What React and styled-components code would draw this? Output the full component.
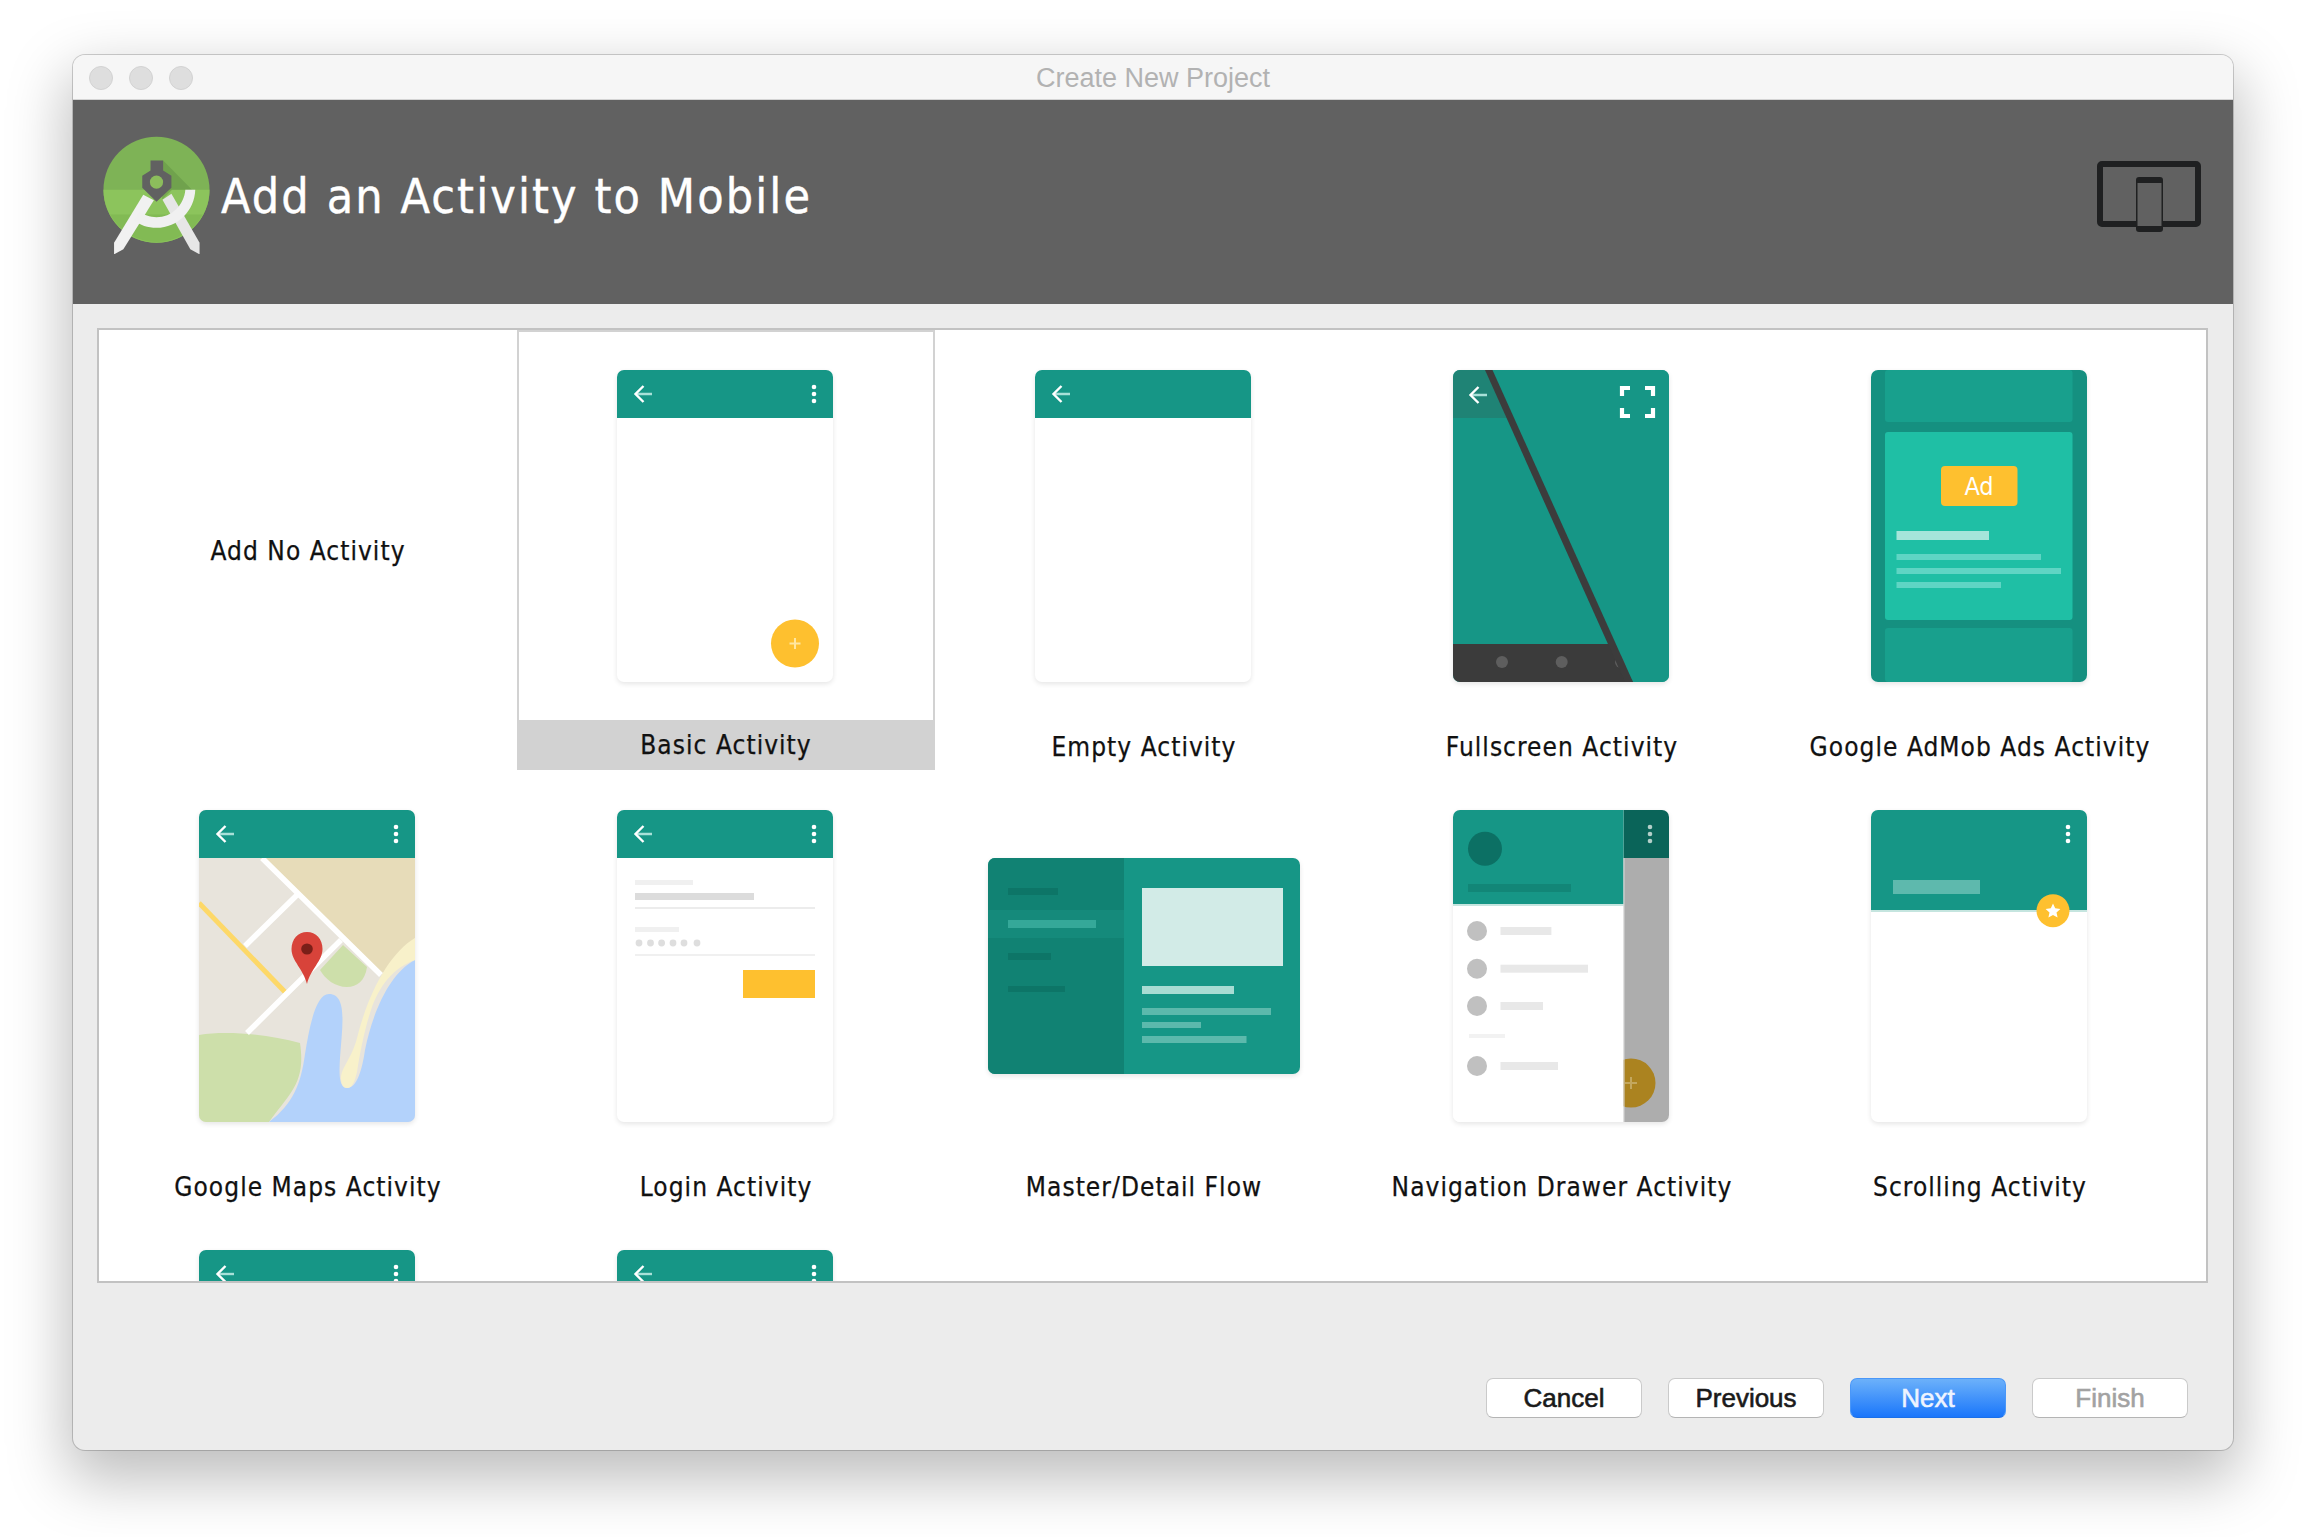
import React from 'react';
import styled, { createGlobalStyle } from 'styled-components';

const GlobalStyle = createGlobalStyle`
  html, body {
    margin: 0;
    background: #fff;
  }
`;

const Page = styled.div`
  box-sizing: border-box;
  width: 2305px;
  height: 1537px;
  padding: 55px 72px 0 73px;
  overflow: hidden;
`;

const Window = styled.div`
  width: 2160px;
  height: 1395px;
  display: flex;
  flex-direction: column;
  background: #ececec;
  border-radius: 12px;
  box-shadow: 0 0 0 1px rgba(0,0,0,0.18), 0 24px 60px 6px rgba(0,0,0,0.26);
  overflow: hidden;
  flex-shrink: 0;
`;

const TitleBar = styled.div`
  position: relative;
  height: 44px;
  flex-shrink: 0;
  display: flex;
  align-items: center;
  justify-content: center;
  background: #f6f6f6;
  border-bottom: 1px solid #d4d4d4;
`;

const Lights = styled.div`
  position: absolute;
  left: 16px;
  top: 11px;
  display: flex;
  gap: 16px;
`;

const Light = styled.span`
  box-sizing: border-box;
  width: 24px;
  height: 24px;
  border-radius: 50%;
  background: #dedede;
  border: 1px solid #d2d2d2;
`;

const WindowTitle = styled.div`
  padding-top: 3px;
  font-family: "Liberation Sans", Arial, sans-serif;
  font-size: 27px;
  color: #b2b2b2;
`;

const Header = styled.div`
  height: 204px;
  flex-shrink: 0;
  box-sizing: border-box;
  padding: 0 31px 12px 30px;
  display: flex;
  align-items: center;
  background: #616161;
`;

const LogoSvg = styled.svg`
  width: 107px;
  height: 118px;
  margin-top: -2px;
  flex-shrink: 0;
`;

const HeaderTitle = styled.h1`
  flex: 1;
  margin: 0 0 0 11px;
  font-family: "DejaVu Sans", Verdana, sans-serif;
  font-stretch: condensed;
  font-size: 48px;
  font-weight: 400;
  letter-spacing: 2.1px;
  -webkit-text-stroke: 0.4px #fff;
  color: #fff;
  white-space: nowrap;
`;

const DeviceSvg = styled.svg`
  width: 105px;
  height: 71px;
  flex-shrink: 0;
`;

const Body = styled.div`
  padding: 24px 25px 0 24px;
`;

const Gallery = styled.div`
  box-sizing: border-box;
  height: 955px;
  display: grid;
  grid-template-columns: repeat(5, 418px);
  grid-auto-rows: 440px;
  align-content: start;
  background: #fff;
  border: 2px solid #c2c2c2;
  overflow: hidden;
`;

const Cell = styled.div`
  display: flex;
  flex-direction: column;
  box-shadow: ${p => (p.$selected ? 'inset 0 0 0 2px #d2d2d2' : 'none')};
`;

const ThumbArea = styled.div`
  height: 352px;
  padding: 40px ${p => (p.$wide ? 0 : 2)}px 0 0;
  box-sizing: border-box;
  margin-bottom: 38px;
  display: flex;
  align-items: center;
  justify-content: center;
`;

const Thumb = styled.div`
  width: ${p => (p.$wide ? 312 : 216)}px;
  height: ${p => (p.$wide ? 216 : 312)}px;
  border-radius: 7px;
  overflow: hidden;
  background: #fff;
  box-shadow: 0 2px 5px rgba(0,0,0,0.1);
  svg {
    display: block;
    width: 100%;
    height: 100%;
  }
`;

const Label = styled.div`
  height: 50px;
  box-sizing: border-box;
  padding-top: ${p => (p.$selected ? 0 : 3)}px;
  display: flex;
  align-items: center;
  justify-content: center;
  font-family: "DejaVu Sans", Verdana, sans-serif;
  font-stretch: condensed;
  font-size: 26px;
  letter-spacing: 1.05px;
  -webkit-text-stroke: 0.25px #111;
  color: #111;
  background: ${p => (p.$selected ? '#d2d2d2' : 'transparent')};
`;

const PlainCell = styled.div`
  padding-top: 2px;
  display: flex;
  align-items: center;
  justify-content: center;
  font-family: "DejaVu Sans", Verdana, sans-serif;
  font-stretch: condensed;
  font-size: 26px;
  letter-spacing: 1.05px;
  -webkit-text-stroke: 0.25px #111;
  color: #111;
`;

const Footer = styled.div`
  display: flex;
  justify-content: flex-end;
  gap: 26px;
  padding: 95px 45px 32px 0;
`;

const Button = styled.button`
  box-sizing: border-box;
  width: 156px;
  height: 40px;
  padding: 0;
  font-family: "Liberation Sans", Arial, sans-serif;
  font-size: 26px;
  -webkit-text-stroke: 0.6px currentColor;
  color: ${p => (p.$primary ? '#eef4ff' : p.disabled ? '#a2a2a2' : '#1a1a1a')};
  background: ${p => (p.$primary ? 'linear-gradient(#6cb1fa, #1a76fb)' : '#fff')};
  border: 1px solid ${p => (p.$primary ? '#4a97f8' : '#cacaca')};
  border-bottom-color: ${p => (p.$primary ? '#1a6fe8' : '#b4b4b4')};
  border-radius: 7px;
`;

const TEAL = '#169686';
const AMBER = '#fec02f';

const BackArrow = ({ x = 17, y = 15, color = '#fff' }) => (
  <g transform={`translate(${x} ${y})`} fill="none" strokeWidth="2.4">
    <path d="M3 9h15" stroke="#a8e0d8" />
    <path d="M9.5 1L1.5 9l8 8" stroke={color} />
  </g>
);

const MoreDots = ({ x = 197, color = '#fff' }) => (
  <g fill={color}>
    <circle cx={x} cy="17" r="2.3" />
    <circle cx={x} cy="24" r="2.3" />
    <circle cx={x} cy="31" r="2.3" />
  </g>
);

const AppBar = ({ dots = true }) => (
  <g>
    <rect width="216" height="48" fill={TEAL} />
    <BackArrow />
    {dots && <MoreDots />}
  </g>
);

const PhoneSvg = ({ children }) => <svg viewBox="0 0 216 312">{children}</svg>;

const BasicArt = () => (
  <PhoneSvg>
    <AppBar />
    <circle cx="178" cy="273.5" r="24" fill={AMBER} />
    <path d="M178 268v11M172.5 273.5h11" stroke="#ffe6a0" strokeWidth="2" />
  </PhoneSvg>
);

const EmptyArt = () => (
  <PhoneSvg>
    <AppBar dots={false} />
  </PhoneSvg>
);

const FullscreenArt = () => (
  <PhoneSvg>
    <rect width="216" height="312" fill={TEAL} />
    <path d="M0 0h34l22 48H0z" fill="#1f8375" />
    <path d="M0 274h158l22 38H0z" fill="#3b3b3b" />
    <circle cx="49" cy="292" r="6" fill="#5e5e5e" />
    <circle cx="108.700" cy="292" r="6" fill="#5e5e5e" />
    <circle cx="168" cy="292" r="6" fill="#5e5e5e" />
    <path d="M39.500 0H216v312h-36z" fill={TEAL} />
    <path d="M32 0h7.500L180 312h-8z" fill="#3c3c3c" />
    <BackArrow x={16} y={16} />
    <path
      d="M169 26v-8h8M192 18h8v8M169 38v8h8M192 46h8v-8"
      fill="none"
      stroke="#fff"
      strokeWidth="4.200"
    />
  </PhoneSvg>
);

const AdmobArt = () => (
  <PhoneSvg>
    <rect width="216" height="312" fill="#159080" />
    <rect x="14" width="187.500" height="52" rx="3" fill="#18a08d" />
    <rect x="14" y="62" width="187.500" height="188" rx="3" fill="#1fbfa5" />
    <rect x="14" y="258" width="187.500" height="54" rx="3" fill="#18a08d" />
    <rect x="70" y="96" width="76.500" height="40" rx="4" fill={AMBER} />
    <text
      x="108"
      y="125"
      textAnchor="middle"
      fontFamily="'DejaVu Sans', sans-serif"
      fontStretch="condensed"
      fontSize="25"
      fill="#fff"
    >
      Ad
    </text>
    <rect x="25.500" y="161" width="92.500" height="9" fill="#a5e5da" />
    <rect x="25.500" y="184" width="144.500" height="6" fill="#5fd5c4" />
    <rect x="25.500" y="198" width="164.500" height="6" fill="#5fd5c4" />
    <rect x="25.500" y="212" width="104.500" height="6" fill="#5fd5c4" />
  </PhoneSvg>
);

const MapsArt = () => (
  <PhoneSvg>
    <rect width="216" height="312" fill="#e8e4dc" />
    <path d="M61 48h155v80l-34 37z" fill="#e7dcb9" />
    <path d="M144 135l24 22c-2 14-10 20-20 20-12 0-22-8-27-17z" fill="#cddfaa" />
    <path d="M0 225c30-5 70 0 101 8 6 40-10 50-31 79H0z" fill="#cddfaa" />
    <path
      d="M216 150c-24 12-42 50-50 90-3 20-8 38-18 38-8 0-8-14-7-30 2-30 8-64-11-64-14 0-20 36-24 60-4 30-12 50-36 68h146z"
      fill="#b3d2fb"
    />
    <path
      d="M216 128c-24 14-46 52-58 100-5 20-16 30-16 40 0 7 3 10 6 10 6 0 8-8 10-16 3-20 8-44 14-62 8-24 22-42 44-50z"
      fill="#f8f1ca"
    />
    <path d="M0 93l86 89" stroke="#fdd868" strokeWidth="5" fill="none" />
    <path d="M63 48l119 117M98 85l-52 51M142 130l-94 93" stroke="#fff" fill="none" strokeWidth="5.500" />
    <path
      d="M108 122c-9 0-15.500 7-15.500 17 0 12 12 20 15.500 35 3.500-15 15.500-23 15.500-35 0-10-6.500-17-15.500-17z"
      fill="#d8433a"
    />
    <ellipse cx="108" cy="139" rx="5.800" ry="5.500" fill="#7a1f18" />
    <AppBar />
  </PhoneSvg>
);

const LoginArt = () => (
  <PhoneSvg>
    <AppBar />
    <rect x="18" y="70" width="58" height="5" fill="#f0f0f0" />
    <rect x="18" y="83" width="119" height="7" fill="#dcdcdc" />
    <rect x="18" y="97" width="180" height="2" fill="#ececec" />
    <rect x="18" y="117" width="44" height="5" fill="#f0f0f0" />
    {[22, 33.5, 44.6, 56, 67, 80].map(cx => (
      <circle key={cx} cx={cx} cy="133" r="3.400" fill="#dedede" />
    ))}
    <rect x="18" y="144" width="180" height="2" fill="#f0f0f0" />
    <rect x="126" y="160" width="72" height="28" fill={AMBER} />
  </PhoneSvg>
);

const MasterDetailArt = () => (
  <svg viewBox="0 0 312 216">
    <rect width="312" height="216" fill={TEAL} />
    <rect width="136" height="216" fill="#118273" />
    <rect y="52" width="136" height="28" fill="#158a7b" />
    <rect x="20" y="30" width="50" height="7" fill="#0d7567" />
    <rect x="20" y="62" width="88" height="8" fill="#35a899" />
    <rect x="20" y="95" width="43" height="7" fill="#0d7567" />
    <rect x="20" y="128" width="57" height="6" fill="#0d7567" />
    <rect x="154" y="30" width="141" height="78" fill="#d2ebe7" />
    <rect x="154" y="128" width="92" height="8" fill="#a8dcd3" />
    <rect x="154" y="150" width="129" height="7" fill="#5cb9ac" />
    <rect x="154" y="164" width="59" height="6" fill="#5cb9ac" />
    <rect x="154" y="178" width="104.500" height="7" fill="#5cb9ac" />
  </svg>
);

const DrawerArt = () => (
  <PhoneSvg>
    <rect x="170.500" width="45.500" height="48" fill="#0a6459" />
    <rect x="170.500" y="48" width="45.500" height="264" fill="#adadad" />
    <circle cx="178" cy="273" r="24.500" fill="#ab8320" />
    <path d="M178 267v12M172 273h12" stroke="#c3a75e" strokeWidth="2" />
    <rect y="96" width="170.500" height="216" fill="#fff" />
    <rect width="170.500" height="94" fill={TEAL} />
    <rect y="94" width="170.500" height="2" fill="#c5e5df" />
    <rect x="170.500" y="48" width="1" height="264" fill="#d8d8d8" />
    <circle cx="32" cy="38.700" r="17" fill="#0c7064" />
    <rect x="15" y="74" width="103" height="8" fill="#128677" />
    {[
      [121, 98.4],
      [158.7, 135],
      [196, 90],
      [256, 105],
    ].map(([cy, end]) => (
      <g key={cy}>
        <circle cx="24" cy={cy} r="10" fill="#c0c0c0" />
        <rect x="47.500" y={cy - 4} width={end - 47.5} height="8" fill="#e8e8e8" />
      </g>
    ))}
    <rect x="16" y="224" width="36" height="4" fill="#f2f2f2" />
    <MoreDots color="#b3cfc9" />
  </PhoneSvg>
);

const ScrollingArt = () => (
  <PhoneSvg>
    <rect width="216" height="100" fill={TEAL} />
    <rect y="100" width="216" height="2" fill="#c5e5df" />
    <MoreDots />
    <rect x="22" y="70" width="87" height="14" fill="#5eb9ad" />
    <circle cx="182" cy="100.700" r="16.500" fill={AMBER} />
    <path
      d="M182 93.500l2.200 4.800 5.200.6-3.900 3.500 1.100 5.100-4.600-2.600-4.600 2.600 1.100-5.100-3.900-3.500 5.200-.6z"
      fill="#fff"
    />
  </PhoneSvg>
);

const templates = [
  { name: 'Basic Activity', Art: BasicArt, selected: true },
  { name: 'Empty Activity', Art: EmptyArt },
  { name: 'Fullscreen Activity', Art: FullscreenArt },
  { name: 'Google AdMob Ads Activity', Art: AdmobArt },
  { name: 'Google Maps Activity', Art: MapsArt },
  { name: 'Login Activity', Art: LoginArt },
  { name: 'Master/Detail Flow', Art: MasterDetailArt, wide: true },
  { name: 'Navigation Drawer Activity', Art: DrawerArt },
  { name: 'Scrolling Activity', Art: ScrollingArt },
  { Art: BasicArt },
  { Art: BasicArt },
];

const StudioLogo = () => (
  <LogoSvg viewBox="40 48 320 356">
    <circle cx="200" cy="210" r="160" fill="#7eb356" />
    <path d="M40 210h320a160 160 0 0 1-320 0z" fill="#8cc45c" />
    <path d="M60 285a160 160 0 0 0 280 0z" fill="#7cb44f" opacity="0.6" />
    <path d="M220 122l87 88h-60l-30 30z" fill="#5f8f42" opacity="0.45" />
    <path d="M160 225L72 370v35l28-15 92-148z" fill="#f1f1f1" />
    <path d="M218 240l84 150 28 15v-35L245 222z" fill="#e6e6e6" />
    <path
      d="M317 210c-2 62-52 115-117 115-26 0-50-8-68-22l15-28c14 11 33 18 53 18 46 0 83-36 87-83z"
      fill="#f0f0f0"
    />
    <path d="M182 122h38v30l25 16v36l-45 42-43-42v-36l25-16z" fill="#616161" />
    <circle cx="200" cy="187" r="20" fill="#8cbd5c" />
  </LogoSvg>
);

const DeviceIcon = () => (
  <DeviceSvg viewBox="0 0 105 71">
    <rect x="3" y="3" width="98" height="60" rx="2" fill="none" stroke="#1f2021" strokeWidth="6" />
    <rect x="39" y="16" width="27" height="55" rx="3" fill="#1f2021" />
    <rect x="40.500" y="22" width="24" height="43" fill="#616161" />
  </DeviceSvg>
);

export default function App() {
  return (
    <Page>
      <GlobalStyle />
      <Window>
        <TitleBar>
          <Lights>
            <Light />
            <Light />
            <Light />
          </Lights>
          <WindowTitle>Create New Project</WindowTitle>
        </TitleBar>
        <Header>
          <StudioLogo />
          <HeaderTitle>Add an Activity to Mobile</HeaderTitle>
          <DeviceIcon />
        </Header>
        <Body>
          <Gallery>
            <PlainCell>Add No Activity</PlainCell>
            {templates.map(({ name, Art, selected, wide }, i) => (
              <Cell key={i} $selected={selected}>
                <ThumbArea $wide={wide}>
                  <Thumb $wide={wide}>
                    <Art />
                  </Thumb>
                </ThumbArea>
                {name && <Label $selected={selected}>{name}</Label>}
              </Cell>
            ))}
          </Gallery>
        </Body>
        <Footer>
          <Button>Cancel</Button>
          <Button>Previous</Button>
          <Button $primary>Next</Button>
          <Button disabled>Finish</Button>
        </Footer>
      </Window>
    </Page>
  );
}
